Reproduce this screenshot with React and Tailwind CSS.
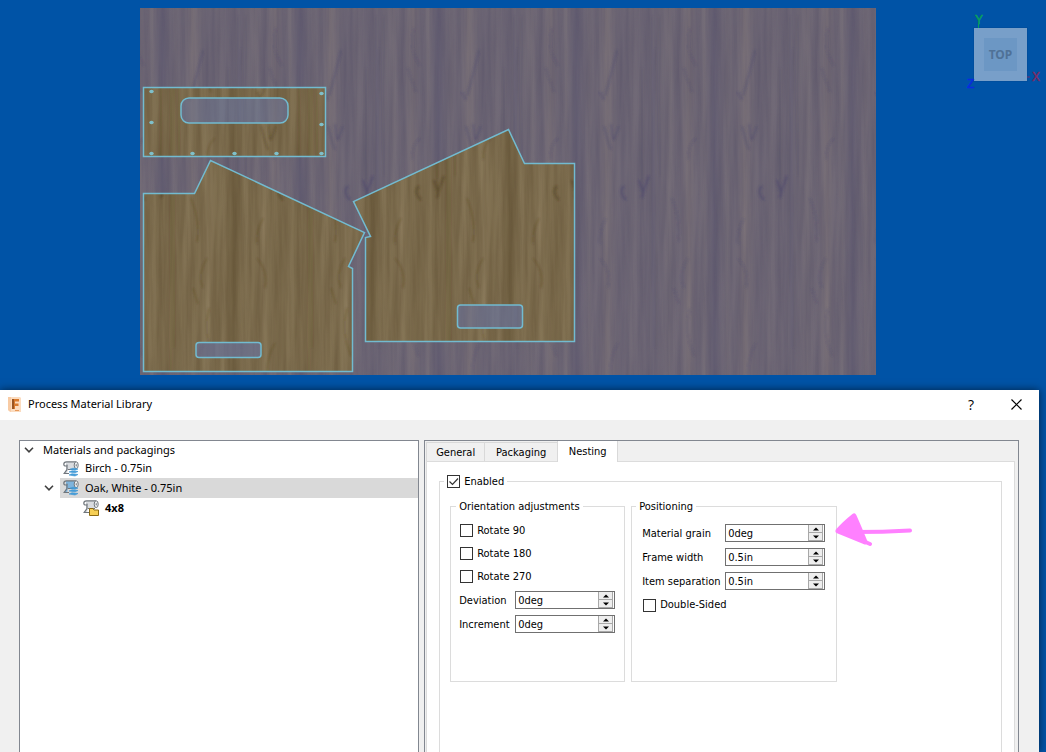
import React from 'react';

const TILE = 138;

const Grain = ({ id, dark, light, matrix, shift }) => (
  <>
    <filter id={`${id}-noise`} x="0" y="0" width="100%" height="100%" colorInterpolationFilters="sRGB">
      <feTurbulence type="fractalNoise" baseFrequency="0.16 0.008" numOctaves="4" seed="7" stitchTiles="stitch" />
      <feColorMatrix type="matrix" values={matrix} />
    </filter>
    <linearGradient id={`${id}-bands`}>
      <stop offset="0" stopColor={dark} stopOpacity="0.36" />
      <stop offset="0.1" stopColor={dark} stopOpacity="0.06" />
      <stop offset="0.22" stopColor={light} stopOpacity="0.6" />
      <stop offset="0.4" stopColor={dark} stopOpacity="0.12" />
      <stop offset="0.56" stopColor={dark} stopOpacity="0.2" />
      <stop offset="0.68" stopColor={dark} stopOpacity="0.04" />
      <stop offset="0.82" stopColor={light} stopOpacity="0.6" />
      <stop offset="0.93" stopColor={dark} stopOpacity="0.06" />
      <stop offset="1" stopColor={dark} stopOpacity="0.36" />
    </linearGradient>
    <filter id={`${id}-soft`}>
      <feGaussianBlur stdDeviation="0.9" />
    </filter>
    <pattern id={id} x={shift} y="0" width={TILE} height="367" patternUnits="userSpaceOnUse">
      <rect width={TILE} height="367" fill={`url(#${id}-bands)`} />
      <rect width={TILE} height="367" filter={`url(#${id}-noise)`} />
      <g fill="none" stroke={dark} strokeOpacity="0.45" filter={`url(#${id}-soft)`}>
        <path d="M28 118 l3 12 l4 12 M35 116 l2 16 M43 118 l-5 14 M24 84 l4 8 M41 42 q-6 26 -12 46" strokeWidth="1.500" />
        <path d="M63 172 l4 12 l6 -16 M48 178 q-6 6 2 14 M68 182 l-2 8" strokeWidth="2.500" />
        <path d="M76 8 v359 M79 40 v300 M66 60 v110 M84 8 v160" strokeOpacity="0.25" />
        <path d="M114 20 q-6 20 6 38 M108 60 q4 14 8 24 M96 190 q10 26 6 44 M30 210 q-8 16 -6 26 M120 130 q-8 6 -8 22" />
        <path d="M24 250 q12 14 8 30 M112 250 q-10 16 -4 30 M98 280 l5 16 M42 335 q-8 12 -8 32 M114 300 q-6 26 4 48" />
      </g>
    </pattern>
  </>
);

const leftPanel = 'M3.500 185.500H54.500L70.500 152.500L224.500 224.500L208.500 258.500L212.500 260.500V363.500H3.500Z';
const rightPanel = 'M225.500 333.500V229.500L230.500 228.500L213.500 193.500L368.500 121.500L384.500 155.500H434.500V333.500Z';
const screws = [[11, 83], [11, 114], [11, 145], [52, 145], [94, 145], [136, 145], [181, 145], [181, 85], [181, 116]];

const Cutouts = (props) => (
  <g {...props}>
    <rect x="41" y="90" width="107" height="25" rx="8" />
    <rect x="56" y="334.500" width="65" height="15" rx="3" />
    <rect x="317.500" y="297" width="65" height="23" rx="3" />
  </g>
);

const NestingBoard = () => (
  <svg viewBox="0 0 736 367" className="block w-[736px] shrink-0" role="img" aria-label="Nested sheet">
    <defs>
      <Grain id="sheet" shift="22" dark="#45436a" light="#7d7378" matrix="0 0 0 0 0.29  0 0 0 0 0.27  0 0 0 0 0.37  0.55 0 0 0 -0.14" />
      <Grain id="oak" shift="93" dark="#4a3a1c" light="#8b7b5c" matrix="0 0 0 0 0.29  0 0 0 0 0.22  0 0 0 0 0.12  0.55 0 0 0 -0.14" />
    </defs>
    <rect width="736" height="367" fill="#776f78" />
    <rect width="736" height="367" fill="url(#sheet)" />
    {['#89795a', 'url(#oak)'].map((fill) => (
      <g key={fill} fill={fill}>
        <rect x="3" y="79" width="182" height="70" />
        <path d={leftPanel} />
        <path d={rightPanel} />
      </g>
    ))}
    <g fill="none" stroke="#72bbd0" strokeWidth="1.500">
      <rect x="3.500" y="79.500" width="182" height="69" />
      <path d={leftPanel} />
      <path d={rightPanel} />
    </g>
    <Cutouts fill="#757888" />
    <Cutouts fill="url(#sheet)" fillOpacity="0.7" stroke="#72bbd0" strokeWidth="1.500" />
    <g fill="#7fc0cb">
      {screws.map(([x, y]) => <ellipse key={`${x}-${y}`} cx={x + 0.5} cy={y + 0.5} rx="2.200" ry="1.800" />)}
    </g>
  </svg>
);

const ViewCube = () => (
  <svg viewBox="0 0 80 84" className="mt-1 block w-20 shrink-0" role="img" aria-label="View cube">
    <rect x="7" y="15" width="55" height="55" fill="#00468f" opacity="0.35" />
    <rect x="8" y="16" width="53" height="53" fill="#789fc9" />
    <rect x="18" y="26" width="33" height="33" fill="#6c97c4" />
    <text x="34.500" y="47" textAnchor="middle" fontSize="12" fontWeight="bold" fill="#4f7197" fontFamily="'Noto Sans', sans-serif">TOP</text>
    <g fontSize="12" fontFamily="'Liberation Sans', sans-serif" strokeWidth="0.500">
      <text x="9" y="12" fill="#08a05c" stroke="#08a05c">Y</text>
      <text x="1" y="76" fill="#0a2be0" stroke="#0a2be0">Z</text>
      <text x="66" y="69" fill="#7a2c66" stroke="#7a2c66">X</text>
    </g>
    <path d="M12.500 12v4" stroke="#08a05c" />
    <path d="M61 65h3" stroke="#7a2c66" />
  </svg>
);

const FusionIcon = () => (
  <svg viewBox="0 0 16 16" className="h-4 w-4">
    <path d="M1 0h12l1 1v14H3l-2-2z" fill="#fbdcc0" />
    <path d="M1 0h3v15l-3-2z" fill="#f8cba4" />
    <path d="M5 2h7v2.500H8v2h3.500V9H8v3H5z" fill="#d97a2e" />
    <path d="M5 2h2v10H5z" fill="#9a5522" />
    <path d="M8 13h4v1H8z" fill="#e89a5c" />
  </svg>
);

const RollIcon = ({ tint = '#d9dce0', folder }) => (
  <svg viewBox="0 0 16 16" className="h-4 w-4 shrink-0">
    <path d="M3 1h10v7H5l-1 5H1l2-4z" fill={tint} />
    <path d="M13 .800H3.500C1.500.800.800 2 .800 3.200S1.600 5 2.800 5H4v3.500L1.200 12.500H6" fill="none" stroke="#70767c" strokeWidth="1.200" />
    <path d="M4 5V3.500M5 8.500h7" fill="none" stroke="#70767c" />
    <ellipse cx="13.200" cy="4.200" rx="2" ry="3.400" fill="#eef1f3" stroke="#70767c" />
    <ellipse cx="13.200" cy="4.200" rx=".5" ry="1.200" fill="#70767c" />
    {folder ? (
      <path d="M6.500 8.500h3.500l1 1.500h4.500v5.500h-9z" fill="#f6cf55" stroke="#8c6a12" />
    ) : (
      <path d="M7 8.200l3-1 5 .800-3 1.200zM6 11l3-1.200 6 .700-3 1.300zM6 14l3-1.300 6 .800-3 1.500z" fill="#45a0dc" stroke="#3a92d0" strokeWidth=".6" />
    )}
  </svg>
);

const Chevron = () => (
  <svg viewBox="0 0 10 6" className="h-[6px] w-[10px]">
    <path d="M1 .800l4 4 4-4" fill="none" stroke="#404040" strokeWidth="1.600" />
  </svg>
);

const Check = ({ label, defaultChecked = false }) => (
  <label className="flex items-center gap-1">
    <span className="grid h-[13px] w-[13px]">
      <input type="checkbox" defaultChecked={defaultChecked} className="peer col-start-1 row-start-1 h-[13px] w-[13px] appearance-none border border-[#333] bg-white" />
      <svg viewBox="0 0 13 13" className="pointer-events-none invisible col-start-1 row-start-1 h-[13px] w-[13px] peer-checked:visible">
        <path d="M2.500 6.500l3 3 5.500-6" fill="none" stroke="#333" strokeWidth="1.200" />
      </svg>
    </span>
    <span className="pt-px">{label}</span>
  </label>
);

const SpinButton = ({ label, points }) => (
  <button type="button" aria-label={label} className="flex flex-1 items-center justify-center border-r border-b border-[#a8a8a8] bg-[#eee]">
    <svg viewBox="0 0 6 4" className="h-1 w-[6px]"><polygon points={points} fill="#000" /></svg>
  </button>
);

const SpinRow = ({ id, label, value }) => (
  <div className="flex h-6 items-center justify-between">
    <label htmlFor={id} className="pt-[2px]">{label}</label>
    <div className="flex h-[18px] w-[100px] border border-[#707070] bg-white">
      <input id={id} type="text" defaultValue={value} className="min-w-0 flex-1 pt-[2px] pl-[2px] outline-none" />
      <div className="mr-px flex w-[15px] flex-col border-l border-[#a8a8a8]">
        <SpinButton label={`Increase ${label}`} points="0,3.500 3,0.500 6,3.500" />
        <SpinButton label={`Decrease ${label}`} points="0,0.500 3,3.500 6,0.500" />
      </div>
    </div>
  </div>
);

const MaterialTree = () => (
  <ul className="min-w-0 flex-[401] border border-b-0 border-[#828790] bg-white font-['Noto_Sans',sans-serif] text-[11px]">
    <li>
      <div className="flex h-[18px] items-center gap-2 pl-1">
        <button type="button" aria-label="Collapse materials"><Chevron /></button>
        <span className="pl-px">Materials and packagings</span>
      </div>
      <ul>
        <li className="flex h-[19px] items-center gap-[6px] pl-[43px]"><RollIcon />Birch - 0.75in</li>
        <li>
          <div className="flex h-5 items-center pl-6">
            <button type="button" aria-label="Collapse oak"><Chevron /></button>
            <div className="ml-[6px] flex h-5 flex-1 items-center gap-[6px] bg-[#d9d9d9] pl-[3px]">
              <RollIcon tint="#7fb4dc" />Oak, White - 0.75in
            </div>
          </div>
          <ul>
            <li className="flex h-5 items-center gap-[6px] pl-[63px] font-bold"><RollIcon folder />4x8</li>
          </ul>
        </li>
      </ul>
    </li>
  </ul>
);

const GrainArrow = () => (
  <svg viewBox="0 0 78 34" className="absolute top-[15px] left-[203px] w-[78px]" aria-hidden="true">
    <path d="M4 18Q10 11 20 3Q25 14 31 29Z" fill="#ff80ff" stroke="#ff80ff" strokeWidth="5" strokeLinejoin="round" />
    <path d="M22 19Q48 19 76 17.500M20 24L36 31" fill="none" stroke="#ff80ff" strokeWidth="4" strokeLinecap="round" />
  </svg>
);

const NestingTab = () => (
  <fieldset className="min-h-0 flex-1 border border-b-0 border-[#dcdcdc] px-[10px] pt-[9px]">
    <legend className="-ml-[6px] h-4 px-[3px] leading-4"><Check label="Enabled" defaultChecked /></legend>
    <div className="flex gap-[6px]">
      <fieldset className="h-[184px] w-[175px] border border-[#dcdcdc] pt-[5px] pr-[9px] pl-2">
        <legend className="-ml-[3px] h-4 px-[3px] pt-px leading-4">Orientation adjustments</legend>
        {['Rotate 90', 'Rotate 180', 'Rotate 270'].map((label) => (
          <div key={label} className="flex h-[23px] items-center pl-px"><Check label={label} /></div>
        ))}
        <SpinRow id="deviation" label="Deviation" value="0deg" />
        <SpinRow id="increment" label="Increment" value="0deg" />
      </fieldset>
      <div className="relative">
        <fieldset className="h-[184px] w-[206px] border border-[#dcdcdc] pt-[7px] pr-[11px] pl-[10px]">
          <legend className="-ml-[6px] h-4 px-[3px] pt-px leading-4">Positioning</legend>
          <SpinRow id="grain" label="Material grain" value="0deg" />
          <SpinRow id="frame" label="Frame width" value="0.5in" />
          <SpinRow id="separation" label="Item separation" value="0.5in" />
          <div className="flex h-6 items-center pl-px"><Check label="Double-Sided" /></div>
        </fieldset>
        <GrainArrow />
      </div>
    </div>
  </fieldset>
);

const SettingsPanel = () => (
  <section className="flex min-w-0 flex-[593] flex-col border border-b-0 border-[#828790] pr-[3px] pl-px">
    <div role="tablist" className="flex h-[21px] items-end border-b border-[#dcdcdc]">
      <button type="button" role="tab" className="h-[19px] w-[59px] border-x border-t border-[#d9d9d9] pt-[2px]">General</button>
      <button type="button" role="tab" className="h-[19px] w-[72px] border-t border-[#d9d9d9] pt-[2px]">Packaging</button>
      <button type="button" role="tab" aria-selected="true" className="-mb-px h-[21px] w-[61px] border-x border-[#d9d9d9] bg-white pt-px">Nesting</button>
    </div>
    <div className="flex flex-1 flex-col border-x border-[#dcdcdc] bg-white pt-[11px] pr-3 pl-3">
      <NestingTab />
    </div>
  </section>
);

export default function App() {
  return (
    <div className="flex h-screen flex-col overflow-hidden bg-[#0053a6] font-['DejaVu_Sans_Condensed','DejaVu_Sans',sans-serif] text-[11px] text-black">
      <main className="flex h-[390px] shrink-0 items-start justify-between pt-2 pl-[140px]">
        <NestingBoard />
        <ViewCube />
      </main>
      <div role="dialog" aria-labelledby="dialog-title" className="mr-[7px] flex min-h-0 flex-1 flex-col bg-[#f0f0f0] shadow-[0_0_8px_rgba(0,0,0,0.6)]">
        <header className="flex h-[30px] shrink-0 items-center bg-white pr-4 pb-px pl-[7px] font-['Noto_Sans',sans-serif]">
          <FusionIcon />
          <h1 id="dialog-title" className="ml-[5px] flex-1">Process Material Library</h1>
          <button type="button" aria-label="Help" className="mr-8 w-[14px] font-['Open_Sans',sans-serif] text-sm">?</button>
          <button type="button" aria-label="Close">
            <svg viewBox="0 0 13 13" className="h-[13px] w-[13px]"><path d="M1.500 1.500l10 10M11.500 1.500l-10 10" stroke="#000" strokeWidth="1.200" /></svg>
          </button>
        </header>
        <div className="flex min-h-0 flex-1 gap-[5px] pt-5 pr-5 pl-[19px]">
          <MaterialTree />
          <SettingsPanel />
        </div>
      </div>
    </div>
  );
}
